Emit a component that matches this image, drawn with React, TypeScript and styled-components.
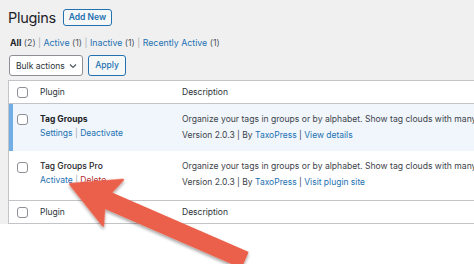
import React from "react";
import styled, { createGlobalStyle } from "styled-components";

const GlobalStyle = createGlobalStyle`
  html, body { margin: 0; padding: 0; background: #ffffff; }
  body { font-family: Inter, "Noto Sans", "Liberation Sans", sans-serif; -webkit-font-smoothing: antialiased; }
  * { box-sizing: border-box; }
`;

const Stage = styled.div`
  position: relative;
  width: 474px;
  height: 264px;
  overflow: hidden;
  background: #ffffff;
`;

const Page = styled.div`
  background: #f0f0f1;
  height: 224px;
  padding-left: 8px;
  padding-top: 9px;
  overflow: hidden;
  display: flex;
  flex-direction: column;
`;

const HeaderBar = styled.div`
  display: flex;
  align-items: center;
  gap: 7px;
  height: 17px;
`;

const Title = styled.h1`
  margin: 0;
  font-size: 14.5px;
  font-weight: 400;
  color: #1d2327;
  line-height: 17px;
  letter-spacing: -0.3px;
`;

const OutlineButton = styled.button<{ $h: number; $bold?: boolean; $w: number }>`
  height: ${(p) => p.$h}px;
  width: ${(p) => p.$w}px;
  padding: 0;
  border: 1px solid #2271b1;
  border-radius: 3px;
  background: #f6f7f7;
  color: #2271b1;
  font-family: inherit;
  font-size: 8.5px;
  font-weight: ${(p) => (p.$bold ? 600 : 500)};
  line-height: 1;
  cursor: pointer;
`;

const Filters = styled.div`
  margin-top: 11px;
  margin-left: 2px;
  font-size: 8.8px;
  line-height: 12px;
  color: #50575e;
  white-space: pre;
`;

const FilterCurrent = styled.span`
  color: #1d2327;
  font-weight: 700;
`;

const FilterLink = styled.span`
  color: #2271b1;
`;

const Sep = styled.span`
  color: #a7aaad;
`;

const TableNav = styled.div`
  margin-top: 6px;
  display: flex;
  align-items: center;
  gap: 5px;
  height: 21px;
  margin-left: 1px;
`;

const Select = styled.div`
  width: 74px;
  height: 21px;
  border: 1px solid #8c8f94;
  border-radius: 3px;
  background: #ffffff;
  display: flex;
  align-items: center;
  justify-content: space-between;
  padding: 0 5px 0 6px;
  font-size: 8.5px;
  color: #2c3338;
`;

const Table = styled.div`
  margin-top: 4px;
  width: 520px;
  border: 1px solid #c3c4c7;
  background: #ffffff;
  display: flex;
  flex-direction: column;
`;

const Row = styled.div<{ $h: number; $active?: boolean; $line?: "top" | "bottom" }>`
  display: flex;
  height: ${(p) => p.$h}px;
  align-items: ${(p) => (p.$line ? "center" : "flex-start")};
  background: ${(p) => (p.$active ? "#f0f6fc" : "#ffffff")};
  border-bottom: ${(p) => (p.$line === "top" ? "1px solid #c3c4c7" : "none")};
  border-top: ${(p) => (p.$line === "bottom" ? "1px solid #c3c4c7" : "none")};
  font-size: 8.5px;
  color: #2c3338;
`;

const CheckCell = styled.div<{ $active?: boolean; $top?: number }>`
  width: 25px;
  flex: none;
  align-self: stretch;
  display: flex;
  align-items: ${(p) => (p.$top ? "flex-start" : "center")};
  padding-top: ${(p) => p.$top ?? 0}px;
  padding-left: ${(p) => (p.$active ? 4 : 8)}px;
  border-left: ${(p) => (p.$active ? "4px solid #72aee6" : "none")};
`;

const Checkbox = styled.span`
  width: 11px;
  height: 11px;
  border: 1px solid #8c8f94;
  border-radius: 3px;
  background: #ffffff;
  display: block;
`;

const NameCell = styled.div`
  width: 142px;
  flex: none;
  padding: 9px 6px 0;
`;

const HeadCell = styled.div<{ $w?: number }>`
  ${(p) => (p.$w ? `width: ${p.$w}px; flex: none;` : "flex: 1;")}
  padding: 0 6px;
  color: #2c3338;
`;

const DescCell = styled.div`
  flex: 1;
  padding: 9px 6px 0;
  color: #3c434a;
  white-space: nowrap;
  overflow: hidden;
`;

const PluginName = styled.div`
  font-weight: 700;
  color: #1d2327;
  line-height: 13px;
`;

const PluginNameRegular = styled(PluginName)`
  font-weight: 500;
`;

const Actions = styled.div`
  margin-top: 1px;
  line-height: 13px;
  color: #a7aaad;
  white-space: pre;
`;

const Link = styled.span<{ $danger?: boolean }>`
  color: ${(p) => (p.$danger ? "#b32d2e" : "#2271b1")};
`;

const DescLine = styled.div`
  line-height: 13px;
  font-size: 8.6px;
`;

const Meta = styled.div`
  margin-top: 3px;
  line-height: 13px;
  color: #3c434a;
  white-space: pre;
`;

const ArrowLayer = styled.svg`
  position: absolute;
  left: 0;
  top: 0;
  pointer-events: none;
  overflow: visible;
`;

const Chevron = () => (
  <svg width="8" height="6" viewBox="0 0 8 6">
    <path d="M1 1.5 L4 4.5 L7 1.5" fill="none" stroke="#50575e" strokeWidth="1.2" />
  </svg>
);

export default function App() {
  return (
    <Stage>
      <GlobalStyle />
      <Page>
        <HeaderBar>
          <Title>Plugins</Title>
          <OutlineButton $h={17} $w={49} $bold>Add New</OutlineButton>
        </HeaderBar>
        <Filters>
          <FilterCurrent>All</FilterCurrent> (2) <Sep>|</Sep> <FilterLink>Active</FilterLink> (1) <Sep>|</Sep>{" "}
          <FilterLink>Inactive</FilterLink> (1) <Sep>|</Sep> <FilterLink>Recently Active</FilterLink> (1)
        </Filters>
        <TableNav>
          <Select>
            Bulk actions
            <Chevron />
          </Select>
          <OutlineButton $h={21} $w={38}>Apply</OutlineButton>
        </TableNav>
        <Table>
          <Row $h={23} $line="top">
            <CheckCell>
              <Checkbox />
            </CheckCell>
            <HeadCell $w={142}>Plugin</HeadCell>
            <HeadCell>Description</HeadCell>
          </Row>
          <Row $h={47} $active>
            <CheckCell $active $top={10}>
              <Checkbox />
            </CheckCell>
            <NameCell>
              <PluginName>Tag Groups</PluginName>
              <Actions>
                <Link>Settings</Link> | <Link>Deactivate</Link>
              </Actions>
            </NameCell>
            <DescCell>
              <DescLine>Organize your tags in groups or by alphabet. Show tag clouds with many variations.</DescLine>
              <Meta>
                Version 2.0.3 | By <Link>TaxoPress</Link> | <Link>View details</Link>
              </Meta>
            </DescCell>
          </Row>
          <Row $h={49}>
            <CheckCell $top={11}>
              <Checkbox />
            </CheckCell>
            <NameCell>
              <PluginNameRegular>Tag Groups Pro</PluginNameRegular>
              <Actions>
                <Link>Activate</Link> | <Link $danger>Delete</Link>
              </Actions>
            </NameCell>
            <DescCell>
              <DescLine>Organize your tags in groups or by alphabet. Show tag clouds with many variations.</DescLine>
              <Meta>
                Version 2.0.3 | By <Link>TaxoPress</Link> | <Link>Visit plugin site</Link>
              </Meta>
            </DescCell>
          </Row>
          <Row $h={23} $line="bottom">
            <CheckCell>
              <Checkbox />
            </CheckCell>
            <HeadCell $w={142}>Plugin</HeadCell>
            <HeadCell>Description</HeadCell>
          </Row>
        </Table>
      </Page>
      <ArrowLayer width="474" height="264" viewBox="0 0 474 264">
        <defs>
          <filter id="arrowShadow" x="-20%" y="-20%" width="140%" height="140%">
            <feDropShadow dx="1" dy="2" stdDeviation="1.5" floodColor="#000" floodOpacity="0.35" />
          </filter>
        </defs>
        <g transform="translate(70 184) rotate(23.5)" filter="url(#arrowShadow)">
          <path
            d="M0 0 L47 -25 L41 -8 L190 -8 L190 8 L41 8 L47 25 Z"
            fill="#ea604c"
            stroke="#ea604c"
            strokeWidth="2"
            strokeLinejoin="round"
          />
        </g>
      </ArrowLayer>
    </Stage>
  );
}
